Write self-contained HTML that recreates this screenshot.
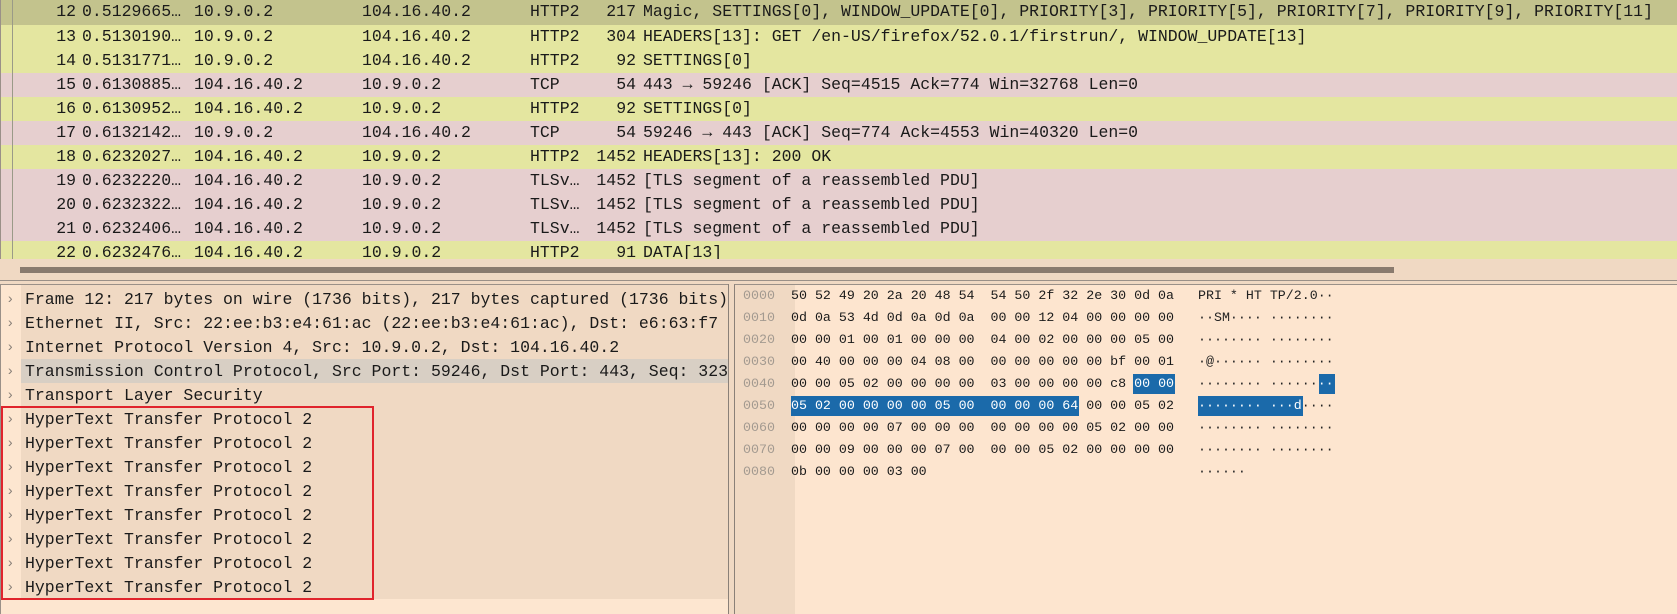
<!DOCTYPE html>
<html><head><meta charset="utf-8"><style>
*{margin:0;padding:0;box-sizing:border-box}
body{width:1677px;height:614px;overflow:hidden;background:#f0d9c3;position:relative;font-family:"Liberation Mono",monospace;color:#1a1a1a}
.r{position:absolute;left:1px;width:1676px;height:24px;font-size:16.5px;line-height:24px;white-space:pre}
.y{background:#e4e6a0}.p{background:#e6cfcf}.s{background:#c3c38d}
.r span{position:absolute;top:0}
.n{right:calc(1676px - 75px);text-align:right}
.ln{right:calc(1676px - 635px);text-align:right}
.d{position:absolute;left:0;width:729px;height:24px;font-size:16.5px;line-height:24px;white-space:pre}
.d .c{position:absolute;left:6px;top:0;color:#8a8078;font-size:14px}
.d .t{position:absolute;left:25px;top:0}
.h{position:absolute;font-size:13.3px;line-height:22px;white-space:pre;height:22px}
.o{left:743px;color:#a39a90}
.x{left:791px}
.a{left:1198px;color:#222}
.hl{position:absolute;background:#1b6aaa;height:20px}
</style></head><body>
<div style="position:absolute;left:0;top:0;width:1677px;height:259px;background:#e4e6a0"></div>
<div class="r s" style="top:0;height:25px"><span class="n">12</span><span style="left:81px">0.5129665…</span><span style="left:193px">10.9.0.2</span><span style="left:361px">104.16.40.2</span><span style="left:529px">HTTP2</span><span class="ln">217</span><span style="left:642px">Magic, SETTINGS[0], WINDOW_UPDATE[0], PRIORITY[3], PRIORITY[5], PRIORITY[7], PRIORITY[9], PRIORITY[11]</span></div>
<div class="r y" style="top:25px"><span class="n">13</span><span style="left:81px">0.5130190…</span><span style="left:193px">10.9.0.2</span><span style="left:361px">104.16.40.2</span><span style="left:529px">HTTP2</span><span class="ln">304</span><span style="left:642px">HEADERS[13]: GET /en-US/firefox/52.0.1/firstrun/, WINDOW_UPDATE[13]</span></div>
<div class="r y" style="top:49px"><span class="n">14</span><span style="left:81px">0.5131771…</span><span style="left:193px">10.9.0.2</span><span style="left:361px">104.16.40.2</span><span style="left:529px">HTTP2</span><span class="ln">92</span><span style="left:642px">SETTINGS[0]</span></div>
<div class="r p" style="top:73px"><span class="n">15</span><span style="left:81px">0.6130885…</span><span style="left:193px">104.16.40.2</span><span style="left:361px">10.9.0.2</span><span style="left:529px">TCP</span><span class="ln">54</span><span style="left:642px">443 → 59246 [ACK] Seq=4515 Ack=774 Win=32768 Len=0</span></div>
<div class="r y" style="top:97px"><span class="n">16</span><span style="left:81px">0.6130952…</span><span style="left:193px">104.16.40.2</span><span style="left:361px">10.9.0.2</span><span style="left:529px">HTTP2</span><span class="ln">92</span><span style="left:642px">SETTINGS[0]</span></div>
<div class="r p" style="top:121px"><span class="n">17</span><span style="left:81px">0.6132142…</span><span style="left:193px">10.9.0.2</span><span style="left:361px">104.16.40.2</span><span style="left:529px">TCP</span><span class="ln">54</span><span style="left:642px">59246 → 443 [ACK] Seq=774 Ack=4553 Win=40320 Len=0</span></div>
<div class="r y" style="top:145px"><span class="n">18</span><span style="left:81px">0.6232027…</span><span style="left:193px">104.16.40.2</span><span style="left:361px">10.9.0.2</span><span style="left:529px">HTTP2</span><span class="ln">1452</span><span style="left:642px">HEADERS[13]: 200 OK</span></div>
<div class="r p" style="top:169px"><span class="n">19</span><span style="left:81px">0.6232220…</span><span style="left:193px">104.16.40.2</span><span style="left:361px">10.9.0.2</span><span style="left:529px">TLSv…</span><span class="ln">1452</span><span style="left:642px">[TLS segment of a reassembled PDU]</span></div>
<div class="r p" style="top:193px"><span class="n">20</span><span style="left:81px">0.6232322…</span><span style="left:193px">104.16.40.2</span><span style="left:361px">10.9.0.2</span><span style="left:529px">TLSv…</span><span class="ln">1452</span><span style="left:642px">[TLS segment of a reassembled PDU]</span></div>
<div class="r p" style="top:217px"><span class="n">21</span><span style="left:81px">0.6232406…</span><span style="left:193px">104.16.40.2</span><span style="left:361px">10.9.0.2</span><span style="left:529px">TLSv…</span><span class="ln">1452</span><span style="left:642px">[TLS segment of a reassembled PDU]</span></div>
<div class="r y" style="top:241px;height:18px;overflow:hidden"><span class="n">22</span><span style="left:81px">0.6232476…</span><span style="left:193px">104.16.40.2</span><span style="left:361px">10.9.0.2</span><span style="left:529px">HTTP2</span><span class="ln">91</span><span style="left:642px">DATA[13]</span></div>
<div style="position:absolute;left:0;top:0;width:1px;height:280px;background:#9a9088"></div>
<div style="position:absolute;left:12px;top:0;width:1px;height:259px;background:#9a9a88"></div>
<div style="position:absolute;left:0;top:259px;width:1677px;height:21px;background:#f0d9c3"></div>
<div style="position:absolute;left:20px;top:267px;width:1374px;height:6px;background:#8a7b6e"></div>
<div style="position:absolute;left:0;top:280px;width:1677px;height:1px;background:#9a9088"></div>
<div style="position:absolute;left:0;top:284px;width:729px;height:330px;background:#fde6d0"></div>
<div style="position:absolute;left:0;top:284px;width:729px;height:1px;background:#9a9088"></div>
<div style="position:absolute;left:0;top:284px;width:1px;height:330px;background:#9a9088"></div>
<div style="position:absolute;left:21px;top:285px;width:708px;height:314px;background:#f0d9c3"></div>
<div style="position:absolute;left:21px;top:359px;width:708px;height:24px;background:#d8cfc4"></div>
<div class="d" style="top:288px"><span class="c">›</span><span class="t">Frame 12: 217 bytes on wire (1736 bits), 217 bytes captured (1736 bits)</span></div>
<div class="d" style="top:312px"><span class="c">›</span><span class="t">Ethernet II, Src: 22:ee:b3:e4:61:ac (22:ee:b3:e4:61:ac), Dst: e6:63:f7</span></div>
<div class="d" style="top:336px"><span class="c">›</span><span class="t">Internet Protocol Version 4, Src: 10.9.0.2, Dst: 104.16.40.2</span></div>
<div class="d" style="top:360px"><span class="c">›</span><span class="t">Transmission Control Protocol, Src Port: 59246, Dst Port: 443, Seq: 323</span></div>
<div class="d" style="top:384px"><span class="c">›</span><span class="t">Transport Layer Security</span></div>
<div class="d" style="top:408px"><span class="c">›</span><span class="t">HyperText Transfer Protocol 2</span></div>
<div class="d" style="top:432px"><span class="c">›</span><span class="t">HyperText Transfer Protocol 2</span></div>
<div class="d" style="top:456px"><span class="c">›</span><span class="t">HyperText Transfer Protocol 2</span></div>
<div class="d" style="top:480px"><span class="c">›</span><span class="t">HyperText Transfer Protocol 2</span></div>
<div class="d" style="top:504px"><span class="c">›</span><span class="t">HyperText Transfer Protocol 2</span></div>
<div class="d" style="top:528px"><span class="c">›</span><span class="t">HyperText Transfer Protocol 2</span></div>
<div class="d" style="top:552px"><span class="c">›</span><span class="t">HyperText Transfer Protocol 2</span></div>
<div class="d" style="top:576px"><span class="c">›</span><span class="t">HyperText Transfer Protocol 2</span></div>
<div style="position:absolute;left:1px;top:406px;width:373px;height:194px;border:2px solid #e0242c"></div>
<div style="position:absolute;left:728px;top:284px;width:1px;height:330px;background:#8a8078"></div>
<div style="position:absolute;left:734px;top:284px;width:943px;height:330px;background:#fde5cf;border-left:1px solid #8a8078;border-top:1px solid #9a9088"></div>
<div style="position:absolute;left:735px;top:285px;width:60px;height:329px;background:#f0d9c3"></div>
<div class="hl" style="left:1133px;top:374px;width:42px"></div>
<div class="hl" style="left:1319px;top:374px;width:16px"></div>
<div class="hl" style="left:791px;top:396px;width:288px"></div>
<div class="hl" style="left:1198px;top:396px;width:105px"></div>
<div class="h o" style="top:285px">0000</div><div class="h x" style="top:285px">50 52 49 20 2a 20 48 54  54 50 2f 32 2e 30 0d 0a</div><div class="h a" style="top:285px">PRI * HT TP/2.0··</div>
<div class="h o" style="top:307px">0010</div><div class="h x" style="top:307px">0d 0a 53 4d 0d 0a 0d 0a  00 00 12 04 00 00 00 00</div><div class="h a" style="top:307px">··SM···· ········</div>
<div class="h o" style="top:329px">0020</div><div class="h x" style="top:329px">00 00 01 00 01 00 00 00  04 00 02 00 00 00 05 00</div><div class="h a" style="top:329px">········ ········</div>
<div class="h o" style="top:351px">0030</div><div class="h x" style="top:351px">00 40 00 00 00 04 08 00  00 00 00 00 00 bf 00 01</div><div class="h a" style="top:351px">·@······ ········</div>
<div class="h o" style="top:373px">0040</div><div class="h x" style="top:373px">00 00 05 02 00 00 00 00  03 00 00 00 00 c8 <span style="color:#fff">00 00</span></div><div class="h a" style="top:373px">········ ······<span style="color:#fff">··</span></div>
<div class="h o" style="top:395px">0050</div><div class="h x" style="top:395px"><span style="color:#fff">05 02 00 00 00 00 05 00  00 00 00 64</span> 00 00 05 02</div><div class="h a" style="top:395px"><span style="color:#fff">········ ···d</span>····</div>
<div class="h o" style="top:417px">0060</div><div class="h x" style="top:417px">00 00 00 00 07 00 00 00  00 00 00 00 05 02 00 00</div><div class="h a" style="top:417px">········ ········</div>
<div class="h o" style="top:439px">0070</div><div class="h x" style="top:439px">00 00 09 00 00 00 07 00  00 00 05 02 00 00 00 00</div><div class="h a" style="top:439px">········ ········</div>
<div class="h o" style="top:461px">0080</div><div class="h x" style="top:461px">0b 00 00 00 03 00</div><div class="h a" style="top:461px">······</div>
</body></html>
